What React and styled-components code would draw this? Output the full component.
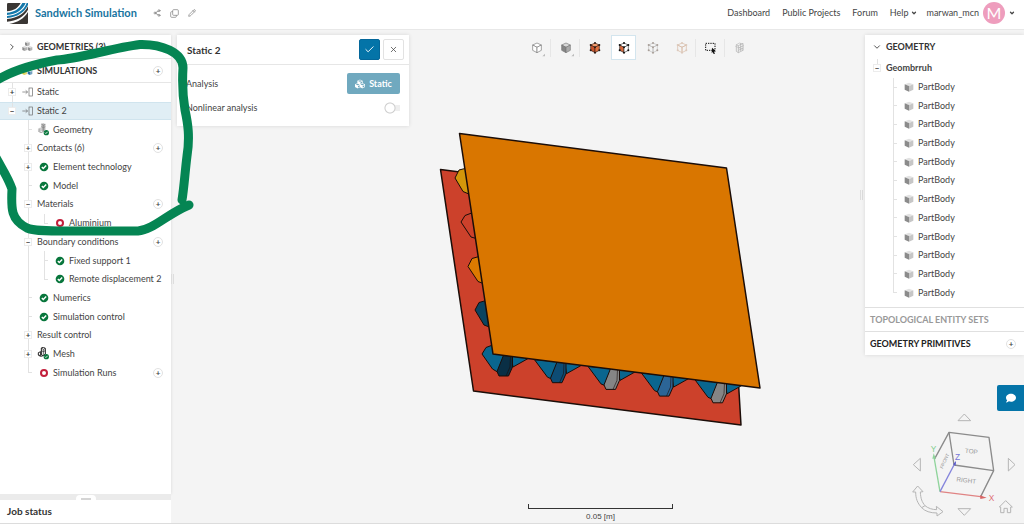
import React, { useState } from 'react'
import styled, { createGlobalStyle, css } from 'styled-components'
import { Check, ChevronDown, ChevronRight, Pencil, Share2, X } from 'lucide-react'
import { FaComment, FaCubes } from 'react-icons/fa'

const simulationTree = [
	{ label: 'Static', depth: 0, toggle: '+', icon: 'static' },
	{ label: 'Static 2', depth: 0, toggle: '-', icon: 'static', selected: true, end: true },
	{ label: 'Geometry', depth: 1, icon: 'geometry' },
	{ label: 'Contacts (6)', depth: 1, toggle: '+', add: true },
	{ label: 'Element technology', depth: 1, toggle: '+', icon: 'ok' },
	{ label: 'Model', depth: 1, icon: 'ok' },
	{ label: 'Materials', depth: 1, toggle: '-', add: true },
	{ label: 'Aluminium', depth: 2, icon: 'todo', end: true },
	{ label: 'Boundary conditions', depth: 1, toggle: '-', add: true },
	{ label: 'Fixed support 1', depth: 2, icon: 'ok' },
	{ label: 'Remote displacement 2', depth: 2, icon: 'ok', end: true },
	{ label: 'Numerics', depth: 1, icon: 'ok' },
	{ label: 'Simulation control', depth: 1, icon: 'ok' },
	{ label: 'Result control', depth: 1, toggle: '+' },
	{ label: 'Mesh', depth: 1, toggle: '+', icon: 'mesh' },
	{ label: 'Simulation Runs', depth: 1, icon: 'todo', add: true, end: true },
]

const geometryTree = [
	{ label: 'Geombrruh', depth: 0, toggle: '-', bold: true, end: true },
	...Array.from({ length: 12 }, (_, i) => ({
		label: 'PartBody',
		depth: 1,
		icon: 'part',
		end: i === 11,
	})),
]

const tools = [
	{ name: 'Wireframe view', kind: 'outline', corner: true, divider: true },
	{ name: 'Shaded view', kind: 'solid', corner: true, divider: true },
	{ name: 'Select volumes', kind: 'volume' },
	{ name: 'Select faces', kind: 'face' },
	{ name: 'Select vertices', kind: 'vertex' },
	{ name: 'Select edges', kind: 'edge', divider: true },
	{ name: 'Box selection', kind: 'box', divider: true },
	{ name: 'Mesh clip', kind: 'clip' },
]

const prisms = ['#0a2f45', '#0d4c74', '#858585', '#2c6596', '#858585']

const App = () => {
	const [tool, setTool] = useState('face')
	const [nonlinear, setNonlinear] = useState(false)

	return (
		<Page>
			<GlobalStyle />
			<Header>
				<Logo />
				<Title>Sandwich Simulation</Title>
				<HeaderActions>
					<IconButton aria-label="Share">
						<Share2 size={8} strokeWidth={2} />
					</IconButton>
					<IconButton aria-label="Copy">
						<CopyIcon />
					</IconButton>
					<IconButton aria-label="Rename">
						<Pencil size={8} strokeWidth={2} />
					</IconButton>
				</HeaderActions>
				<Nav>
					<a href="#dashboard">Dashboard</a>
					<a href="#projects">Public Projects</a>
					<a href="#forum">Forum</a>
					<a href="#help">
						Help <ChevronDown size={6} strokeWidth={5} />
					</a>
				</Nav>
				<UserMenu>
					marwan_mcn
					<Avatar>M</Avatar>
					<ChevronDown size={6} strokeWidth={5} />
				</UserMenu>
			</Header>

			<Workspace>
				<Sidebar>
					<TreePanel>
						<SectionHeader>
							<ChevronRight size={10} strokeWidth={2} />
							<IconSlot>
								<CubesIcon colors={['#8d8d8d', '#8d8d8d', '#8d8d8d']} />
							</IconSlot>
							<h2>GEOMETRIES (3)</h2>
						</SectionHeader>
						<SectionHeader>
							<ChevronDown size={10} strokeWidth={2} />
							<IconSlot>
								<CubesIcon colors={['#2a8a4a', '#d8c62c', '#2a6fa0']} />
							</IconSlot>
							<h2>SIMULATIONS</h2>
							<AddButton aria-label="Add simulation">+</AddButton>
						</SectionHeader>
						<Tree items={simulationTree} height={299} />
					</TreePanel>
					<Splitter>
						<SplitterTab aria-label="Resize job status">
							<span />
						</SplitterTab>
					</Splitter>
					<JobStatus>Job status</JobStatus>
				</Sidebar>

				<Gutter>
					<Grip />
				</Gutter>

				<Viewport>
					<Scene>
						<Model />
						<Scale>
							<ScaleBar />
							0.05 [m]
						</Scale>
					</Scene>

					<Overlay>
						<Settings>
							<SettingsHeader>
								<h1>Static 2</h1>
								<SquareButton $primary aria-label="Apply">
									<Check size={11} strokeWidth={2} />
								</SquareButton>
								<SquareButton aria-label="Close">
									<X size={9} strokeWidth={2} />
								</SquareButton>
							</SettingsHeader>
							<SettingsBody>
								<Field>
									<span>Analysis</span>
									<AnalysisButton>
										<FaCubes size={10} /> Static
									</AnalysisButton>
								</Field>
								<Field>
									<label htmlFor="nonlinear">Nonlinear analysis</label>
									<Switch
										id="nonlinear"
										type="checkbox"
										checked={nonlinear}
										onChange={(e) => setNonlinear(e.target.checked)}
									/>
								</Field>
							</SettingsBody>
						</Settings>

						<Toolbar>
							{tools.map((item) => (
								<Tool key={item.kind} $divider={item.divider}>
									<ToolButton
										aria-label={item.name}
										$active={tool === item.kind}
										onClick={() => setTool(item.kind)}
									>
										<ToolIcon kind={item.kind} corner={item.corner} />
									</ToolButton>
								</Tool>
							))}
						</Toolbar>

						<RightGutter>
							<Grip />
						</RightGutter>

						<RightColumn>
							<ScenePanel>
								<SectionHeader $plain>
									<ChevronDown size={10} strokeWidth={2} />
									<h2>GEOMETRY</h2>
								</SectionHeader>
								<Tree items={geometryTree} height={243} />
								<PanelRow $muted>
									<h2>TOPOLOGICAL ENTITY SETS</h2>
								</PanelRow>
								<PanelRow>
									<h2>GEOMETRY PRIMITIVES</h2>
									<AddButton aria-label="Add primitive">+</AddButton>
								</PanelRow>
							</ScenePanel>
							<ChatButton aria-label="Chat">
								<FaComment size={10} />
							</ChatButton>
							<Orientation />
						</RightColumn>
					</Overlay>
				</Viewport>
			</Workspace>
			<Marker />
		</Page>
	)
}

const Tree = ({ items, height }) => (
	<TreeList $height={height}>
		{items.map((item, key) => (
			<TreeRow
				key={`row-${key}`}
				$depth={item.depth}
				$end={item.end}
				$selected={item.selected}
				$bold={item.bold}
			>
				{item.toggle ? (
					<Toggle aria-label={`Toggle ${item.label}`}>
						{item.toggle === '+' ? '+' : '−'}
					</Toggle>
				) : (
					<ToggleSpace />
				)}
				{item.icon && (
					<IconSlot>
						<RowIcon kind={item.icon} />
					</IconSlot>
				)}
				<span>{item.label}</span>
				{item.add && <AddButton aria-label={`Add to ${item.label}`}>+</AddButton>}
			</TreeRow>
		))}
	</TreeList>
)

const Logo = () => (
	<svg width="21" height="21" viewBox="0 0 63 63" aria-hidden="true">
		<rect width="63" height="63" rx="4" fill="#3a3634" />
		<path d="M0 25C20 24 33 15 41 0h22v9C54 30 34 45 0 48z" fill="#fff" />
		<path d="M0 29C22 28 37 18 46 0h10C47 20 29 34 0 36z" fill="#1478ab" />
		<path d="M0 39C30 37 50 23 59 0h4v6C53 28 32 42 0 45z" fill="#1478ab" />
		<path d="M0 56C28 54 51 41 63 20v7C52 46 32 58 7 63H0z" fill="#fff" />
	</svg>
)

const CopyIcon = () => (
	<svg width="9" height="9" viewBox="0 0 27 27" fill="none" stroke="currentColor" strokeWidth="2">
		<rect x="8" y="2" width="17" height="17" rx="3" />
		<path d="M8 8H5a3 3 0 0 0-3 3v11a3 3 0 0 0 3 3h11a3 3 0 0 0 3-3v-3" />
	</svg>
)

const SmallCube = ({ x, y, color }) => (
	<g transform={`translate(${x} ${y})`}>
		<path d="M0 3l7-3 7 3-7 3z" fill={color} opacity=".3" />
		<path d="M0 3l7 3v9l-7-3z" fill={color} />
		<path d="M14 3L7 6v9l7-3z" fill={color} opacity=".65" />
	</g>
)

const CubesIcon = ({ colors }) => (
	<svg width="11" height="11" viewBox="0 0 33 33">
		<SmallCube x={9} y={1} color={colors[0]} />
		<SmallCube x={1} y={15} color={colors[1]} />
		<SmallCube x={17} y={15} color={colors[2]} />
	</svg>
)

const OkMark = ({ x = 15, y = 15, r = 13 }) => (
	<g transform={`translate(${x} ${y}) scale(${r / 12})`}>
		<circle r="12" fill="#08763c" />
		<path d="M-6 0l4 4 8-8" fill="none" stroke="#fff" strokeWidth="4" />
	</g>
)

const RowIcon = ({ kind }) => {
	if (kind === 'static') {
		return (
			<svg width="12" height="10" viewBox="0 0 36 30" fill="none" stroke="#666" strokeWidth="2">
				<path d="M4 15h15M14 10l6 5-6 5" />
				<rect x="24" y="3" width="10" height="24" />
			</svg>
		)
	}
	if (kind === 'ok') {
		return (
			<svg width="10" height="10" viewBox="0 0 30 30">
				<OkMark />
			</svg>
		)
	}
	if (kind === 'todo') {
		return (
			<svg width="10" height="10" viewBox="0 0 30 30">
				<circle cx="15" cy="15" r="9" fill="none" stroke="#c31f3b" strokeWidth="6" />
			</svg>
		)
	}
	if (kind === 'part') {
		return (
			<svg width="10" height="10" viewBox="0 0 30 30">
				<path d="M2 7l13-5 13 5-13 5z" fill="#e2e2e2" />
				<path d="M2 7l13 5v17L2 23z" fill="#8b8b8b" />
				<path d="M28 7l-13 5v17l13-6z" fill="#c6c6c6" />
			</svg>
		)
	}
	const mesh = kind === 'mesh'
	return (
		<svg width="12" height="13" viewBox="0 0 36 39">
			<path
				d="M13 3l6-2 6 3v17l-6 5-6-2v-6zM4 17l7-3v12L4 24z"
				fill={mesh ? '#fff' : '#b5b5b5'}
				stroke={mesh ? '#222' : '#ccc'}
				strokeWidth={mesh ? 3 : 1}
			/>
			<path
				d="M13 3l6 4 6-3M19 7v18M13 11l6 3 6-3M4 25l8 4 7-3"
				fill="none"
				stroke={mesh ? '#222' : '#7e7e7e'}
				strokeWidth="2"
			/>
			<OkMark x={28} y={29} r={8} />
		</svg>
	)
}

const cubeStyles = {
	outline: { top: '#fff', left: '#fff', right: '#fff', line: '#777' },
	solid: { top: '#d8d8d8', left: '#858585', right: '#ababab', line: '#777' },
	volume: { top: '#f09a6c', left: '#c9532b', right: '#e0713f', line: '#3a221a', dots: '#2b1a14' },
	face: { top: '#fff', left: '#d4683c', right: '#fff', line: '#333', dots: '#111' },
	vertex: { top: 'none', left: 'none', right: 'none', line: '#bcbcbc', dots: '#a99f98' },
	edge: { top: 'none', left: 'none', right: 'none', line: '#d8b8a2', dots: '#dccabd' },
}

const ToolIcon = ({ kind, corner }) => {
	if (kind === 'box') {
		return (
			<svg width="12" height="12" viewBox="0 0 36 36">
				<rect x="2" y="4" width="28" height="21" fill="none" stroke="#111" strokeWidth="3" strokeDasharray="4 3" />
				<path d="M21 17l12 11-6 1 3 6-4 1-3-6-3 4z" fill="#111" />
			</svg>
		)
	}
	if (kind === 'clip') {
		return (
			<svg width="12" height="12" viewBox="0 0 36 36" fill="none" stroke="#aaa" strokeWidth="2">
				<path d="M7 8l6 3v21l-6-4zM13 11l14-7M13 18l16-7M13 25l15-7M13 32l14-7M20 3v24M27 4v22" />
				<path d="M4 13l24 9M7 8l10-5 10 4" stroke="#bdbdbd" />
			</svg>
		)
	}
	const look = cubeStyles[kind]
	const corners = [[18, 3], [31, 9], [31, 25], [18, 32], [5, 25], [5, 9], [18, 16]]
	return (
		<svg width="16" height="20" viewBox="-6 -12 48 60">
			<g stroke={look.line} strokeWidth="2" strokeLinejoin="round">
				<path d="M5 9l13-6 13 6-13 7z" fill={look.top} />
				<path d="M5 9l13 7v16L5 25z" fill={look.left} />
				<path d="M31 9l-13 7v16l13-7z" fill={look.right} />
			</g>
			{look.dots && corners.map(([x, y]) => (
				<circle key={`${x}-${y}`} cx={x} cy={y} r="3" fill={look.dots} />
			))}
			{corner && <path d="M42 35v8h-8z" fill="#bbb" />}
		</svg>
	)
}

const Model = () => (
	<svg width="340" height="320" viewBox="431 120 340 320" strokeLinejoin="round" role="img" aria-label="Sandwich panel model">
		<g stroke="#1b0d08" strokeWidth="1">
			<path d="M440.500 169.500L728 207L741 425L473.500 391z" fill="#cc412b" strokeWidth="1.500" />
			<path d="M467 168l-8 2-4 8 8 13.500 7 3z" fill="#d3960a" />
			<path d="M473 212.500l-8 3-4 6.500 10 15 7 2z" fill="#cc412b" />
			<path d="M479 256.500l-7 2-4 8 10 15 8 3z" fill="#dd7a00" />
			<path d="M486 300.500l-7 2-4 7.500 9 15 8 3z" fill="#0b4460" />
			<path d="M494 344.500l-8 3-4 6.500 10.500 15 5 3 8-15z" fill="#0a668f" />
			{prisms.map((color, i) => (
				<g key={`prism-${i}`} transform={`translate(${i * 53.5} ${i * 6.7})`}>
					{i > 0 && <path d="M481 353l13 17.500 3.500 1.500 7-17z" fill="#0a668f" />}
					<path d="M511 355l18 3-16 9z" fill="#0a668f" />
					<path d="M504 354l8.500 1v12l-4 9h-9.500l-2-4.500z" fill={color} />
					<path d="M510.500 356l-.5 11-4 9" fill="none" strokeWidth=".6" />
				</g>
			))}
			<path d="M459.500 133.500L726.500 168L760 388L493 354z" fill="#d97600" strokeWidth="1.500" />
		</g>
	</svg>
)

const Orientation = () => (
	<NavCube viewBox="60 36 342 324" role="img" aria-label="View orientation">
		<g fill="none" stroke="#b5b5b5" strokeWidth="3" strokeLinejoin="round">
			<path d="M223 42l19 20h-38zM223 346l19-20h-38zM70 194l21-19v38zM375 194l-20-19v38z" />
			<path d="M328 321l19-19 20 19h-5v17h-10v-13h-10v13h-10v-17z" />
			<path d="M83 258l16 17-8 1c1 20 5 30 14 41 9 8 23 12 35 12l-1-10 20 16-18 13v-9c-20 0-36-5-46-16-13-14-18-28-18-47h-9z" />
			<path d="M105 317l-10 6" />
		</g>
		<g fill="none" stroke="#8b8b8b" strokeWidth="4" strokeLinejoin="round">
			<path d="M177 97l120 15 14 100-119-17z" />
			<path d="M177 97l-44 81M311 212l-39 78" />
		</g>
		<path d="M150 275l122 15" stroke="#e08484" strokeWidth="4" />
		<path d="M270 286l20 7-19 4z" fill="#d96666" />
		<path d="M150 275l-17-98" stroke="#8fd49b" strokeWidth="4" />
		<path d="M131 160l-4 16h11z" fill="#8fd49b" />
		<path d="M150 275l42-80" stroke="#8484dc" strokeWidth="4" />
		<path d="M198 183l-9 10 8 4z" fill="#5b5bcc" />
		<CubeText x="296" y="302" fill="#de6e75">X</CubeText>
		<CubeText x="122" y="156" fill="#7fce8e">Y</CubeText>
		<CubeText x="195" y="179" fill="#7575d8">Z</CubeText>
		<FaceText transform="translate(224 158) rotate(7)">TOP</FaceText>
		<FaceText transform="translate(199 244) rotate(7)">RIGHT</FaceText>
		<FaceText $small transform="translate(158 207) rotate(-65)">FRONT</FaceText>
	</NavCube>
)

// freehand highlight around the simulation tree
const Marker = () => (
	<MarkerLayer width="200" height="240" viewBox="0 0 200 240" aria-hidden="true">
		<path d="M-6 82C12 70 35 64 57 60C78 59 112 48 140 44.500C161 44 183 52 183 68C182 84 183 98 185 110C188 124 190 137 187 156C185 172 184 188 182 200" />
		<path d="M189 205C167 214 153 230 138 231H83C58 231 37 232 27 228C11 220 11 209 12 189C8 177 2 169 -6 154" />
	</MarkerLayer>
)

const GlobalStyle = createGlobalStyle`
	* {
		box-sizing: border-box;
	}

	body {
		margin: 0;
		background: #f4f4f4;
		color: #444;
		font-family: Lato, 'Liberation Sans', sans-serif;
		font-size: 9px;
		line-height: 12px;
	}

	h1, h2, ul {
		margin: 0;
		padding: 0;
		list-style: none;
	}

	h2 {
		font-size: 9px;
		font-weight: 700;
	}

	button {
		font: inherit;
		color: inherit;
		padding: 0;
		border: 0;
		background: none;
		cursor: pointer;
	}

	svg {
		display: block;
		flex: none;
	}
`

const Page = styled.div`
	min-height: 100vh;
	display: flex;
	flex-direction: column;
	border-bottom: 1px solid #dcdcdc;
`

const Header = styled.header`
	display: flex;
	align-items: center;
	padding: 2px 9px 5px 7px;
	background: #fff;
	border-bottom: 1px solid #e8e8e8;
`

const Title = styled.div`
	margin-left: 7px;
	font-size: 11px;
	font-weight: 700;
	color: #1874a0;
`

const HeaderActions = styled.div`
	display: flex;
	gap: 9px;
	margin-left: 16px;
`

const IconButton = styled.button`
	color: #777;
`

const Nav = styled.nav`
	display: flex;
	gap: 12px;
	margin-left: auto;

	a {
		display: flex;
		align-items: center;
		gap: 3px;
		color: #444;
		text-decoration: none;
	}
`

const UserMenu = styled.button`
	display: flex;
	align-items: center;
	gap: 4px;
	margin-left: 9px;
`

const Avatar = styled.span`
	width: 22px;
	height: 22px;
	border-radius: 50%;
	background: #ee9dbd;
	color: #fff;
	font-size: 16px;
	line-height: 22px;
	text-align: center;
`

const Workspace = styled.main`
	flex: 1;
	display: flex;
	padding-top: 5px;
`

const Sidebar = styled.aside`
	width: 171px;
	display: flex;
	flex-direction: column;
`

const TreePanel = styled.section`
	flex: 1;
	background: #fff;
	box-shadow: 0 0 3px rgba(0, 0, 0, 0.12);
`

const SectionHeader = styled.div`
	display: flex;
	align-items: center;
	gap: 4px;
	height: 24px;
	padding: 0 8px 0 7px;
	color: #333;
	border-bottom: ${({ $plain }) => ($plain ? 0 : '1px solid #e6e6e6')};
`

const TreeList = styled.ul`
	display: grid;
	grid-auto-rows: 1fr;
	height: ${({ $height }) => $height}px;
`

const line = 'linear-gradient(#e2e2e2, #e2e2e2)'

// guide lines: one vertical per level, cut at half height on the last child
const guides = ({ $depth, $end }) => {
	const x = 12 + $depth * 16
	const own = `${line} ${x}px 0 / 1px ${$end ? '50%' : '100%'} no-repeat, ${line} ${x}px 50% / 4px 1px no-repeat`
	return $depth === 2 ? `${own}, ${line} 28px 0 / 1px 100% no-repeat` : own
}

const TreeRow = styled.li`
	display: flex;
	align-items: center;
	padding: 0 8px 0 ${({ $depth }) => 8 + $depth * 16}px;
	background: ${guides};
	font-weight: ${({ $bold }) => ($bold ? 700 : 400)};
	white-space: nowrap;

	${({ $selected }) =>
		$selected &&
		css`
			background-color: #e0eef5;
			box-shadow: inset 0 1px #d0e4ee, inset 0 -1px #d0e4ee;
		`}
`

const Toggle = styled.button`
	width: 8px;
	height: 8px;
	margin-right: 5px;
	border: 1px solid #ececec;
	background: #fff;
	color: #333;
	font-size: 8px;
	font-weight: 700;
	line-height: 6px;
`

const ToggleSpace = styled.span`
	width: 13px;
`

const IconSlot = styled.span`
	width: 12px;
	margin-right: 4px;
	display: flex;
	justify-content: flex-end;

	${SectionHeader} & {
		margin-right: 0;
	}
`

const AddButton = styled.button`
	width: 10px;
	height: 10px;
	margin-left: auto;
	border: 1px solid #e2e2e2;
	border-radius: 50%;
	background: #fff;
	color: #444;
	font-size: 8px;
	font-weight: 700;
	line-height: 8px;
`

const Splitter = styled.div`
	height: 6px;
	display: flex;
	align-items: flex-end;
	justify-content: center;
	background: #ebebeb;
`

const SplitterTab = styled.button`
	width: 20px;
	height: 5px;
	padding: 2px 5px 0;
	background: #fff;
	border-radius: 4px 4px 0 0;

	span {
		display: block;
		height: 2px;
		background: #d5d5d5;
	}
`

const JobStatus = styled.section`
	padding: 5px 7px 6px;
	background: #fff;
	color: #333;
	font-size: 10px;
	font-weight: 700;
`

const Gutter = styled.div`
	width: 6px;
	display: flex;
	align-items: center;
`

const Grip = styled.span`
	width: 3px;
	height: 10px;
	border: solid #ddd;
	border-width: 0 1px;
`

const Viewport = styled.section`
	flex: 1;
	min-width: 0;
	display: grid;
`

const Scene = styled.div`
	grid-area: 1 / 1;
	display: flex;
	flex-direction: column;
	align-items: center;
	padding-top: 85px;
`

const Scale = styled.div`
	margin-top: auto;
	color: #444;
	font-family: 'Liberation Sans', sans-serif;
	font-size: 8px;
	text-align: center;
`

const ScaleBar = styled.div`
	width: 145px;
	height: 5px;
	margin-bottom: 2px;
	border: solid #333;
	border-width: 0 1px 1px;
`

const Overlay = styled.div`
	grid-area: 1 / 1;
	display: flex;
	align-items: flex-start;
`

const Settings = styled.section`
	width: 232px;
	background: #fff;
	box-shadow: 0 0 4px rgba(0, 0, 0, 0.12);
`

const SettingsHeader = styled.div`
	display: flex;
	align-items: center;
	gap: 3px;
	padding: 4px 5px 4px 10px;
	border-bottom: 1px solid #e6e6e6;

	h1 {
		flex: 1;
		color: #333;
		font-size: 10px;
		font-weight: 700;
	}
`

const SquareButton = styled.button`
	width: 21px;
	height: 21px;
	display: grid;
	place-items: center;
	border: 1px solid ${({ $primary }) => ($primary ? '#04679a' : '#e2e2e2')};
	border-radius: 2px;
	background: ${({ $primary }) => ($primary ? '#0474a8' : '#fff')};
	color: ${({ $primary }) => ($primary ? '#fff' : '#444')};
`

const SettingsBody = styled.div`
	display: grid;
	gap: 8px;
	padding: 8px 9px 12px;
`

const Field = styled.div`
	display: flex;
	align-items: center;
	justify-content: space-between;
`

const AnalysisButton = styled.button`
	display: flex;
	align-items: center;
	justify-content: center;
	gap: 4px;
	width: 53px;
	height: 21px;
	border-radius: 2px;
	background: #70a9bf;
	color: #fff;
	font-weight: 700;
`

const Switch = styled.input`
	appearance: none;
	width: 16px;
	height: 12px;
	margin: 0;
	background:
		radial-gradient(circle at 6px 6px, #fff 4px, #ccc 5px, transparent 6px),
		linear-gradient(#eee, #eee) 6px 3px / 10px 6px no-repeat;
	border-radius: 4px;

	&:checked {
		background:
			radial-gradient(circle at 10px 6px, #fff 4px, #0474a8 5px, transparent 6px),
			linear-gradient(#70a9bf, #70a9bf) 0 3px / 10px 6px no-repeat;
	}
`

const Toolbar = styled.ul`
	flex: 1;
	display: flex;
	justify-content: center;
	padding-left: 7px;
`

const Tool = styled.li`
	width: 29px;
	padding: 0 2px;
	background: ${({ $divider }) =>
		$divider ? 'linear-gradient(#e6e6e6, #e6e6e6) 100% 50% / 1px 18px no-repeat' : 'none'};
`

const ToolButton = styled.button`
	width: 25px;
	height: 25px;
	display: grid;
	place-items: center;
	border: 1px solid ${({ $active }) => ($active ? '#d3e5ee' : 'transparent')};
	background: ${({ $active }) => ($active ? '#fff' : 'none')};
`

const RightGutter = styled.div`
	align-self: stretch;
	width: 5px;
	padding-top: 155px;

	span {
		display: block;
	}
`

const RightColumn = styled.div`
	width: 159px;
	align-self: stretch;
	display: flex;
	flex-direction: column;
	align-items: flex-end;
`

const ScenePanel = styled.section`
	width: 100%;
	background: #fff;
	box-shadow: 0 0 4px rgba(0, 0, 0, 0.12);

	${TreeList} {
		margin-bottom: 5px;
	}
`

const PanelRow = styled.div`
	display: flex;
	align-items: center;
	height: 24px;
	padding: 0 8px 0 5px;
	border-top: 1px solid #e0e0e0;
	color: ${({ $muted }) => ($muted ? '#999' : '#222')};
`

const ChatButton = styled.button`
	width: 27px;
	height: 26px;
	margin-top: 30px;
	display: grid;
	place-items: center;
	border-radius: 2px 0 0 2px;
	background: #0474a8;
	color: #fff;
`

const NavCube = styled.svg`
	width: 114px;
	height: 108px;
	margin-top: auto;
	margin-bottom: 3px;
`

const CubeText = styled.text`
	font-family: 'Liberation Sans', sans-serif;
	font-size: 25px;
`

const FaceText = styled.text`
	fill: #999;
	font-family: 'Liberation Sans', sans-serif;
	font-size: ${({ $small }) => ($small ? 14 : 19)}px;
`

const MarkerLayer = styled.svg`
	position: absolute;
	top: 0;
	left: 0;
	pointer-events: none;

	path {
		fill: none;
		stroke: #058553;
		stroke-width: 9px;
		stroke-linecap: round;
		stroke-linejoin: round;
	}
`

export default App
